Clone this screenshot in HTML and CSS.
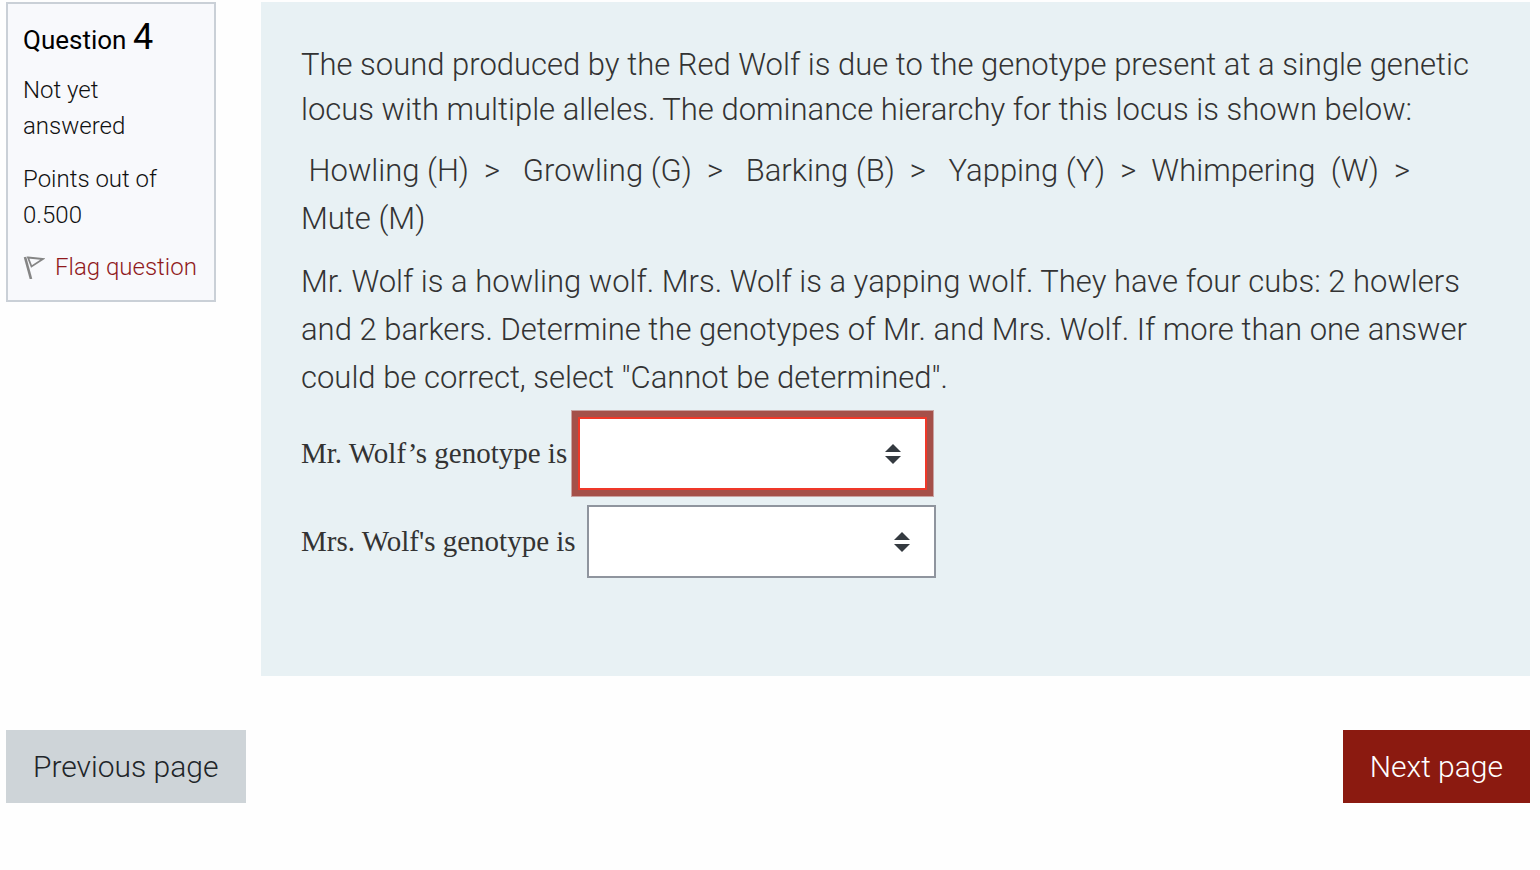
FILE: index.html
```html
<!DOCTYPE html>
<html lang="en">
<head>
  <meta charset="UTF-8">
  <meta name="viewport" content="width=device-width, initial-scale=1.0">
  <title>Question 4</title>
  <link rel="stylesheet" href="styles.css">
</head>
<body>

  <main class="question">
    <aside class="info">
      <h3 class="number">Question <span class="qno">4</span></h3>
      <div class="state">Not yet answered</div>
      <div class="grade">Points out of 0.500</div>
      <a class="flag" href="#">
        <svg class="flag-icon" width="22" height="24" viewBox="0 0 22 24" fill="none" stroke="#858585" aria-hidden="true">
          <path d="M2 2L8 24" stroke-width="2.6"/>
          <path d="M5 2.5L20 4L8.5 11.5Z" stroke-width="1.8"/>
        </svg>
        <span>Flag question</span>
      </a>
    </aside>

    <form class="content">
      <p class="intro">The sound produced by the Red Wolf is due to the genotype present at a single genetic locus with multiple alleles. The dominance hierarchy for this locus is shown below:</p>
      <p>&nbsp;Howling (H)&nbsp; &gt; &nbsp; Growling (G)&nbsp; &gt; &nbsp; Barking (B)&nbsp; &gt; &nbsp; Yapping (Y)&nbsp; &gt;&nbsp; Whimpering&nbsp; (W)&nbsp; &gt; Mute&nbsp;(M)</p>
      <p>Mr. Wolf is a howling wolf. Mrs. Wolf is a yapping wolf. They have four cubs: 2 howlers and 2 barkers. Determine the genotypes of Mr. and Mrs. Wolf. If more than one answer could be correct, select "Cannot be determined".</p>

      <div class="answer">
        <label for="mr">Mr. Wolf’s genotype is</label>
        <select id="mr" class="invalid">
          <option value=""></option>
          <option>Cannot be determined</option>
        </select>
      </div>
      <div class="answer">
        <label for="mrs">Mrs. Wolf's genotype is</label>
        <select id="mrs">
          <option value=""></option>
          <option>Cannot be determined</option>
        </select>
      </div>
    </form>
  </main>

  <nav class="buttons">
    <button type="button" class="prev">Previous page</button>
    <button type="button" class="next">Next page</button>
  </nav>

</body>
</html>
```
FILE: styles.css
```css
body {
  font-family: Roboto, "Liberation Sans", sans-serif;
  font-weight: 300;
  font-size: 31px;
  background-color: #fefefe;
  color: #343a40;
  margin: 0;
  padding: 2px 10px 0 6px;
}

.question {
  display: flex;
  align-items: flex-start;
  gap: 45px;
}

.info {
  box-sizing: border-box;
  flex: 0 0 210px;
  padding: 10px 15px 15px;
  background-color: #f8f9fc;
  border: 2px solid #cad0d7;
  color: #111;
  font-size: 24px;
  line-height: 36px;
}

.number {
  margin: 0 0 9px;
  color: #000;
  font-size: 26px;
  font-weight: 400;
  line-height: 46px;
}

.qno {
  font-size: 36px;
}

.grade {
  margin: 17px 0 16px;
}

.flag {
  display: flex;
  align-items: center;
  gap: 10px;
  color: #90191c;
  text-decoration: none;
  white-space: nowrap;
}

.flag-icon {
  flex: none;
}

.content {
  flex: 1;
  min-width: 0;
  padding: 40px 40px 83px;
  background-color: #e8f1f4;
  color: #333;
}

.content p {
  margin: 0 0 15px;
  line-height: 48px;
}

.content .intro {
  line-height: 45px;
}

.answer {
  display: flex;
  align-items: center;
  gap: 11px;
  margin-bottom: 15px;
  font-family: "Liberation Serif", serif;
  font-weight: 400;
  font-size: 29px;
}

select {
  appearance: none;
  width: 349px;
  height: 73px;
  padding: 0 60px 0 20px;
  border: 2px solid #8f959e;
  border-radius: 0;
  background: #fff url("data:image/svg+xml,%3Csvg xmlns='http://www.w3.org/2000/svg' viewBox='0 0 16 20'%3E%3Cpath fill='%23343a40' d='M0 8L8 0L16 8zM0 12L8 20L16 12z'/%3E%3C/svg%3E") no-repeat right 24px center / 16px 20px;
  font: inherit;
}

select.invalid {
  border-color: #ef3829;
  outline: 1px solid #c9a3a2;
  outline-offset: 6px;
  box-shadow: 0 0 0 6px #a55049;
}

.buttons {
  display: flex;
  justify-content: space-between;
  margin-top: 54px;
}

button {
  height: 73px;
  padding: 0 27px;
  border: none;
  font: inherit;
  font-size: 30px;
  cursor: pointer;
}

.prev {
  background-color: #ced4d8;
  color: #212529;
}

.next {
  background-color: #8b1a10;
  color: #fff;
}
```
